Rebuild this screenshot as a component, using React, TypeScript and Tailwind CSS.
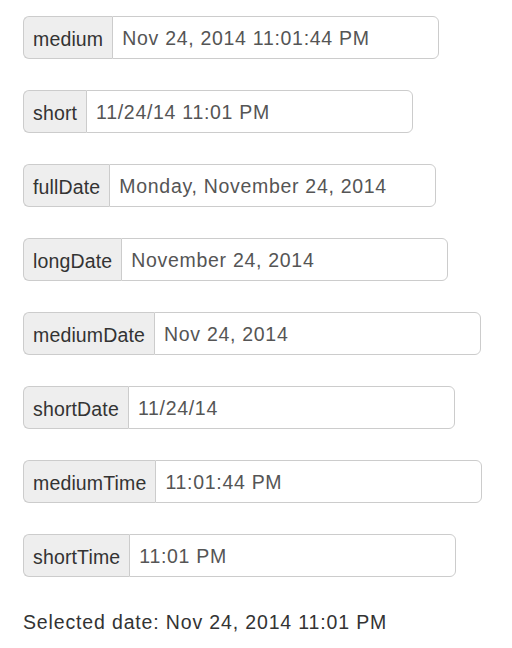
import React from "react";

const rows: [string, string][] = [
  ["medium", "Nov 24, 2014 11:01:44 PM"],
  ["short", "11/24/14 11:01 PM"],
  ["fullDate", "Monday, November 24, 2014"],
  ["longDate", "November 24, 2014"],
  ["mediumDate", "Nov 24, 2014"],
  ["shortDate", "11/24/14"],
  ["mediumTime", "11:01:44 PM"],
  ["shortTime", "11:01 PM"],
];

function DateField({ label, value }: { label: string; value: string }) {
  return (
    <div className="flex h-[43px] mb-[31px]">
      <span className="flex items-center pt-[2px] px-[9px] bg-[#eeeeee] border border-r-0 border-[#cccccc] rounded-l-[6px] text-[#333333] tracking-[0.15px] whitespace-nowrap">
        {label}
      </span>
      <input
        readOnly
        value={value}
        className="w-[327px] h-full pt-[2px] px-[9px] bg-white border border-[#cccccc] rounded-r-[6px] text-[#555555] tracking-[0.7px] outline-none font-['Liberation_Sans',Arial,sans-serif] text-[19.5px]"
      />
    </div>
  );
}

export default function App() {
  return (
    <div className="min-h-screen bg-white pt-4 pl-[23px] font-['Liberation_Sans',Arial,sans-serif] text-[19.5px] leading-[28px] text-[#333333]">
      {rows.map(([label, value]) => (
        <DateField key={label} label={label} value={value} />
      ))}
      <p className="tracking-[0.85px]">Selected date: Nov 24, 2014 11:01 PM</p>
    </div>
  );
}
